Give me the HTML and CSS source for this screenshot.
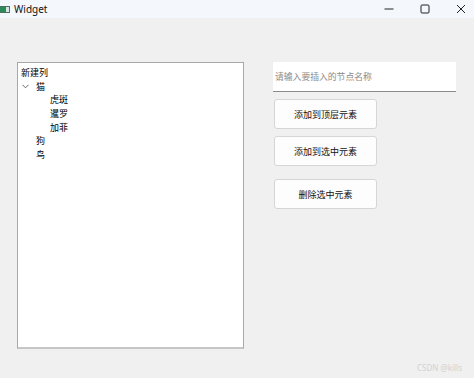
FILE: index.html
```html
<!DOCTYPE html>
<html lang="zh-CN">
<head>
<meta charset="UTF-8">
<title>Widget</title>
<link rel="stylesheet" href="styles.css">
</head>
<body>
<div class="window">
    <header class="titlebar">
        <span class="app-icon"></span>
        <span class="title">Widget</span>
        <div class="controls">
            <svg width="10" height="10" viewBox="0 0 10 10"><path d="M0.5 5h9" stroke="#222" stroke-width="1"/></svg>
            <svg width="10" height="10" viewBox="0 0 10 10"><rect x="1" y="1" width="8" height="8" rx="1" fill="none" stroke="#222" stroke-width="1"/></svg>
            <svg width="10" height="10" viewBox="0 0 10 10"><path d="M1 1l8 8M9 1l-8 8" stroke="#222" stroke-width="1"/></svg>
        </div>
    </header>

    <main class="content">
        <ul class="tree">
            <li class="row">新建列</li>
            <li class="row">
                <svg class="arrow" width="7" height="5" viewBox="0 0 7 5"><path d="M0.5 0.8l3 3 3-3" fill="none" stroke="#555" stroke-width="0.9"/></svg>
                <span class="lvl1">猫</span>
            </li>
            <li class="row lvl2">虎斑</li>
            <li class="row lvl2">暹罗</li>
            <li class="row lvl2">加菲</li>
            <li class="row"><span class="lvl1 pad">狗</span></li>
            <li class="row"><span class="lvl1 pad">鸟</span></li>
        </ul>

        <div class="side">
            <input class="name" placeholder="请输入要插入的节点名称">
            <button class="btn">添加到顶层元素</button>
            <button class="btn">添加到选中元素</button>
            <button class="btn gap">删除选中元素</button>
        </div>
    </main>

    <div class="mark">CSDN @kills</div>
</div>
</body>
</html>
```

FILE: styles.css
```css
body{
    margin: 0;
    font-family: "Noto Sans CJK SC", "Noto Sans", sans-serif;
    background: #f0f0f0;
    color: #000;
}
.window{
    width: 474px;
    height: 378px;
    position: relative;
    background: #f0f0f0;
    overflow: hidden;
}
.titlebar{
    height: 18px;
    background: #f4f7fb;
    display: flex;
    align-items: center;
    font-size: 10px;
}
.app-icon{
    width: 10px;
    height: 7px;
    background: linear-gradient(90deg, #2d8a5a 0 70%, #d8e6e0 70%);
    border: 1px solid #4d6f63;
    border-left: none;
    box-sizing: border-box;
}
.title{
    margin-left: 4px;
    font-family: "Noto Sans", sans-serif;
    color: #111;
}
.controls{
    margin-left: auto;
    display: flex;
    gap: 26px;
    padding-right: 8px;
}
.content{
    display: flex;
    padding: 44px 0 0 17px;
}
.tree{
    list-style: none;
    box-sizing: border-box;
    margin: 0;
    padding: 3px 0 0 3px;
    width: 227px;
    height: 287px;
    background: #fff;
    border: 1px solid #a8a8a8;
    border-bottom: 2px solid #c6c6c6;
    font-size: 9px;
}
.row{
    height: 13.7px;
    line-height: 13.7px;
    display: flex;
    align-items: center;
}
.arrow{
    margin-left: 1px;
}
.lvl1{
    margin-left: 7px;
}
.lvl1.pad{
    margin-left: 15px;
}
.lvl2{
    padding-left: 29px;
}
.side{
    margin-left: 29px;
    display: flex;
    flex-direction: column;
    align-items: flex-start;
}
.name{
    width: 183px;
    height: 30px;
    box-sizing: border-box;
    border: none;
    border-bottom: 1px solid #8a8a8a;
    background: #fff;
    padding: 0 2px;
    font-family: inherit;
    font-size: 8.8px;
    outline: none;

    &::placeholder{
        color: #8a8a8a;
    }
}
.btn{
    width: 103px;
    height: 30px;
    margin-top: 7px;
    margin-left: 1px;
    border: 1px solid #d6d6d6;
    border-radius: 3px;
    background: #fdfdfd;
    font-family: inherit;
    font-size: 9px;
    color: #111;
    padding: 0;

    &.gap{
        margin-top: 13px;
    }
}
.mark{
    position: absolute;
    right: 12px;
    bottom: 5px;
    font-family: "Noto Sans", sans-serif;
    font-size: 8px;
    color: #d2d2d2;
}
```
